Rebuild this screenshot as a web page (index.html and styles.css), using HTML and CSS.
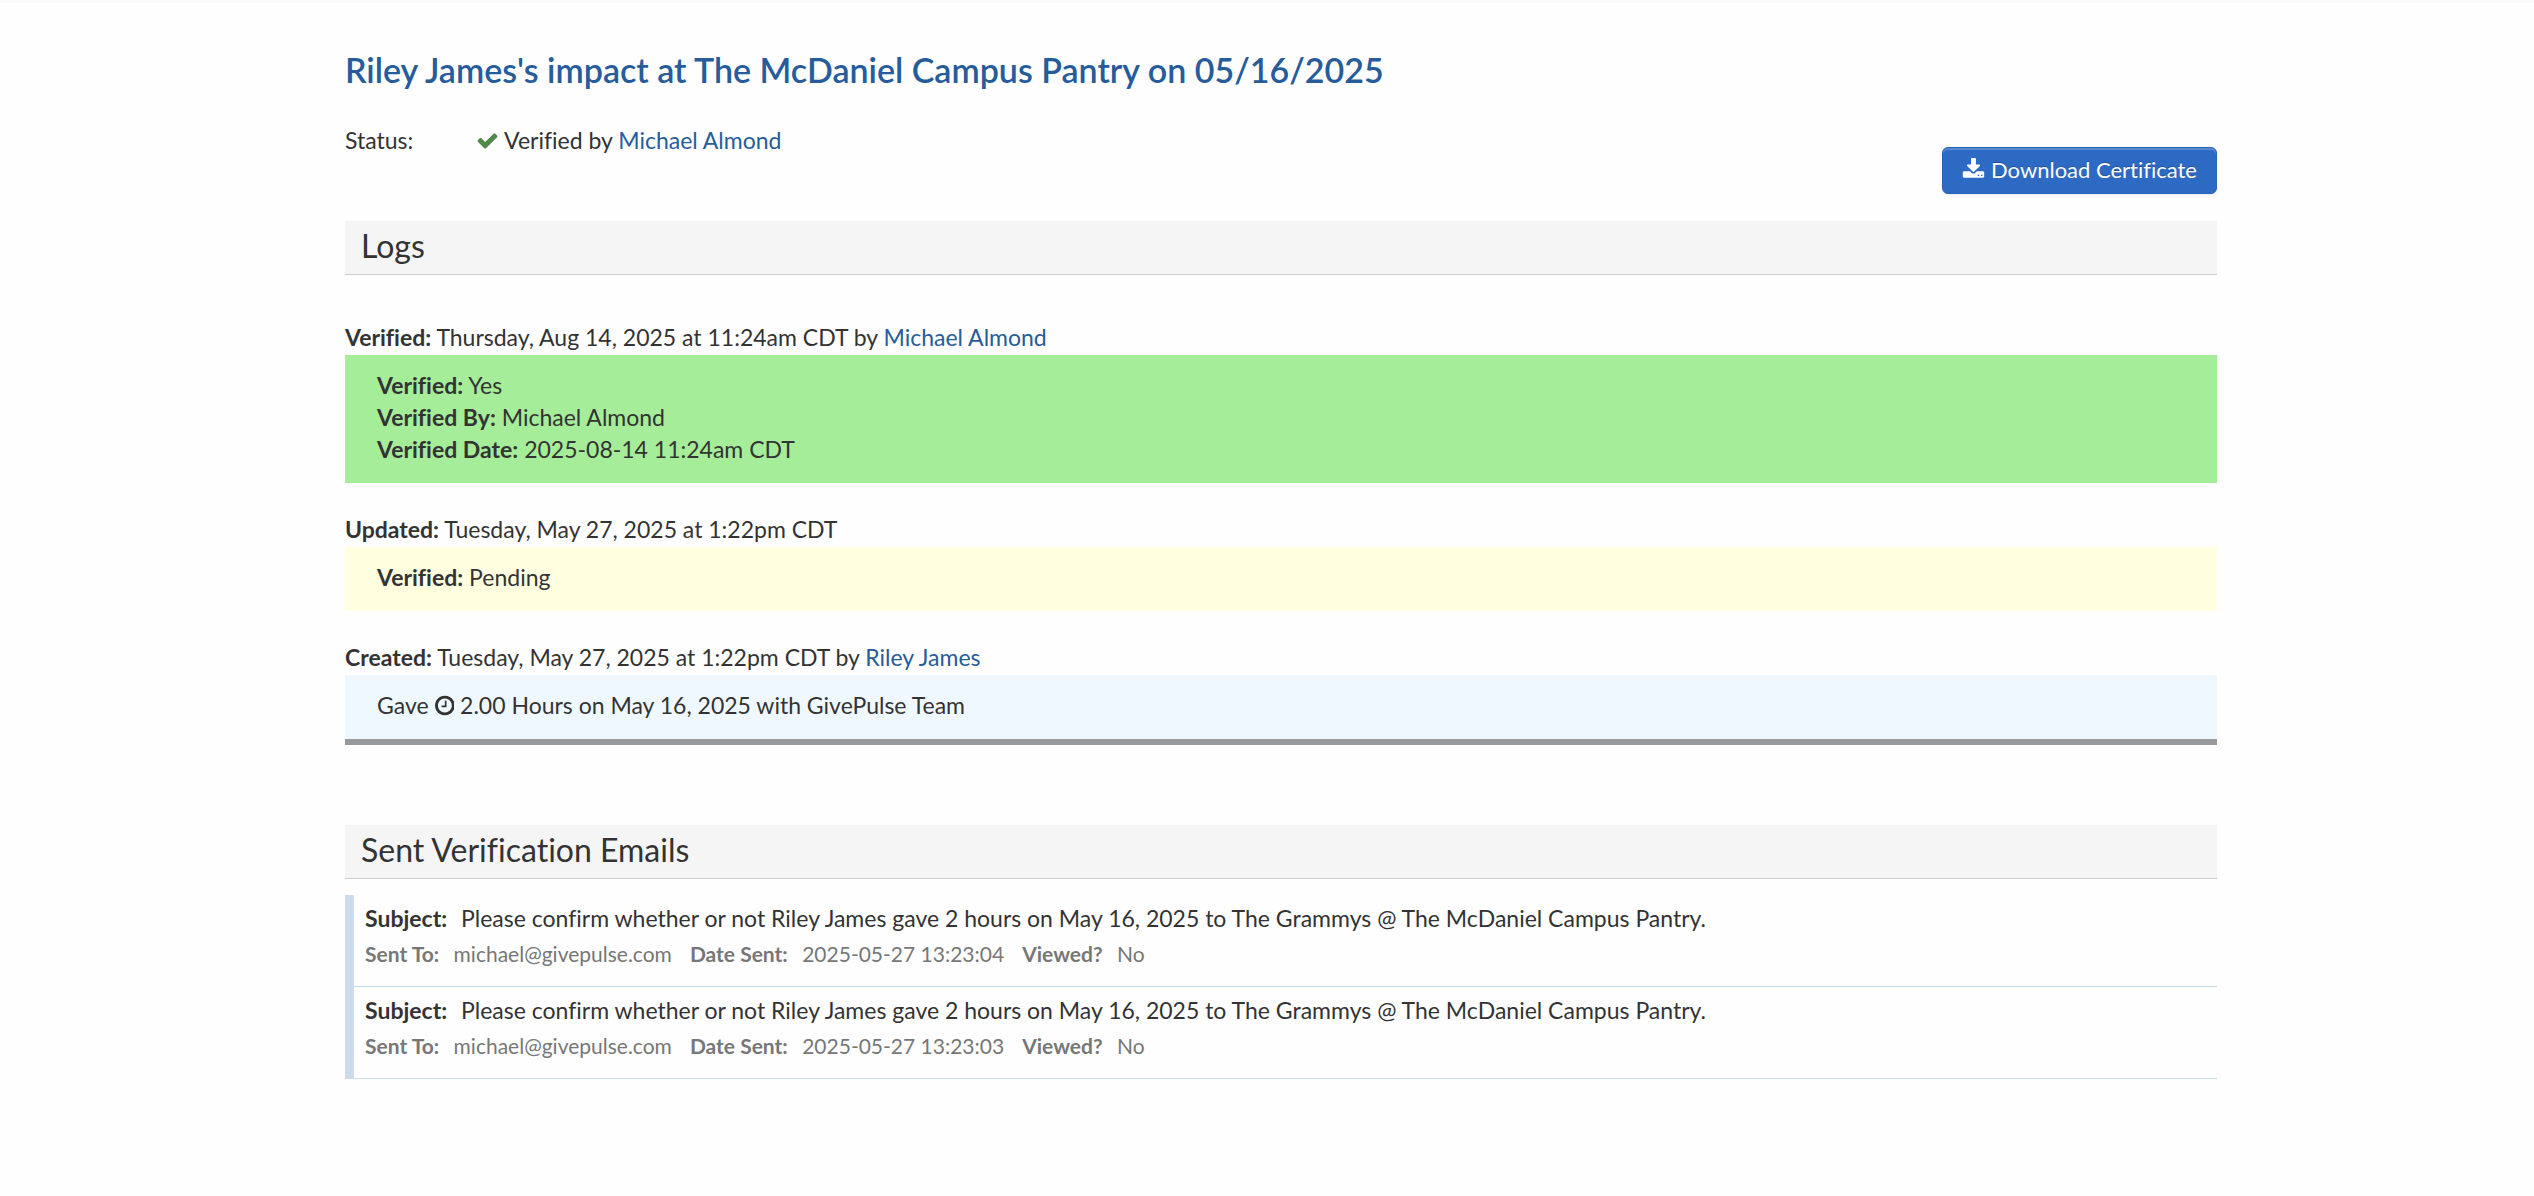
FILE: index.html
```html
<!DOCTYPE html>
<html lang="en">
<head>
    <meta charset="UTF-8">
    <title>Riley James's impact</title>
    <link rel="stylesheet" href="styles.css">
</head>
<body>
<div class="container">
    <h1><a href="#">Riley James's impact at The McDaniel Campus Pantry on 05/16/2025</a></h1>

    <div class="summary">
        <dl class="status">
            <dt>Status:</dt>
            <dd>
                <svg class="icon icon-ok" viewBox="0 0 1792 1792" aria-hidden="true"><path d="M1671 566q0 40-28 68l-724 724-136 136q-28 28-68 28t-68-28l-136-136-362-362q-28-28-28-68t28-68l136-136q28-28 68-28t68 28l294 295 656-657q28-28 68-28t68 28l136 136q28 28 28 68z"/></svg>
                Verified by <a href="#">Michael Almond</a>
            </dd>
        </dl>
        <button class="btn" type="button">
            <svg class="icon" viewBox="0 0 1792 1792" aria-hidden="true"><path d="M1344 1344q0-26-19-45t-45-19-45 19-19 45 19 45 45 19 45-19 19-45zm256 0q0-26-19-45t-45-19-45 19-19 45 19 45 45 19 45-19 19-45zm128-224v320q0 40-28 68t-68 28h-1472q-40 0-68-28t-28-68v-320q0-40 28-68t68-28h465l135 136q58 56 136 56t136-56l136-136h464q40 0 68 28t28 68zm-325-569q17 41-14 70l-448 448q-18 19-45 19t-45-19l-448-448q-31-29-14-70 17-39 59-39h256v-448q0-26 19-45t45-19h256q26 0 45 19t19 45v448h256q42 0 59 39z"/></svg>
            Download Certificate
        </button>
    </div>

    <!-- Logs -->
    <h2>Logs</h2>
    <div class="logs">
        <div class="log">
            <p class="log-title"><strong>Verified:</strong> Thursday, Aug 14, 2025 at 11:24am CDT by <a href="#">Michael Almond</a></p>
            <div class="log-body verified">
                <p><strong>Verified:</strong> Yes</p>
                <p><strong>Verified By:</strong> Michael Almond</p>
                <p><strong>Verified Date:</strong> 2025-08-14 11:24am CDT</p>
            </div>
        </div>
        <div class="log">
            <p class="log-title"><strong>Updated:</strong> Tuesday, May 27, 2025 at 1:22pm CDT</p>
            <div class="log-body updated">
                <p><strong>Verified:</strong> Pending</p>
            </div>
        </div>
        <div class="log">
            <p class="log-title"><strong>Created:</strong> Tuesday, May 27, 2025 at 1:22pm CDT by <a href="#">Riley James</a></p>
            <div class="log-body created">
                <p>Gave <svg class="icon" viewBox="0 0 1536 1792" aria-hidden="true"><path d="M896 544v448q0 14-9 23t-23 9h-320q-14 0-23-9t-9-23v-64q0-14 9-23t23-9h224v-352q0-14 9-23t23-9h64q14 0 23 9t9 23zm416 352q0-148-73-273t-198-198-273-73-273 73-198 198-73 273 73 273 198 198 273 73 273-73 198-198 73-273zm224 0q0 209-103 385.500t-279.500 279.500-385.500 103-385.500-103-279.500-279.500-103-385.500 103-385.500 279.500-279.500 385.500-103 385.500 103 279.500 279.500 103 385.500z"/></svg> 2.00 Hours on May 16, 2025 with GivePulse Team</p>
            </div>
        </div>
    </div>

    <!-- Emails -->
    <h2>Sent Verification Emails</h2>
    <ul class="emails">
        <li>
            <p class="subject"><strong>Subject:</strong> Please confirm whether or not Riley James gave 2 hours on May 16, 2025 to The Grammys @ The McDaniel Campus Pantry.</p>
            <p class="meta">
                <span><strong>Sent To:</strong> michael@givepulse.com</span>
                <span><strong>Date Sent:</strong> 2025-05-27 13:23:04</span>
                <span><strong>Viewed?</strong> No</span>
            </p>
        </li>
        <li>
            <p class="subject"><strong>Subject:</strong> Please confirm whether or not Riley James gave 2 hours on May 16, 2025 to The Grammys @ The McDaniel Campus Pantry.</p>
            <p class="meta">
                <span><strong>Sent To:</strong> michael@givepulse.com</span>
                <span><strong>Date Sent:</strong> 2025-05-27 13:23:03</span>
                <span><strong>Viewed?</strong> No</span>
            </p>
        </li>
    </ul>
</div>
</body>
</html>
```
FILE: styles.css
```css
* {
    margin: 0;
    padding: 0;
    box-sizing: border-box;
}

body {
    font-family: Avenir, Lato, sans-serif;
    font-size: 23px;
    line-height: 32px;
    font-variant-ligatures: no-common-ligatures;
    color: #333;
    background: #fefefe;
    border-top: 3px solid #fafafa;
}

.container {
    padding: 43px 317px 80px 345px;
}

a {
    color: #265c9a;
    text-decoration: none;
}

a:hover {
    text-decoration: underline;
}

h1 {
    font-size: 34px;
    line-height: 48px;
    font-weight: 600;
}

h2 {
    height: 54px;
    padding-left: 16px;
    font-size: 32px;
    line-height: 50px;
    font-weight: 400;
    background: #f5f5f5;
    border-bottom: 1px solid #ccc;
}

.icon {
    height: 23px;
    fill: currentColor;
    vertical-align: -3px;
}

.icon-ok {
    color: #4f8a48;
}

/* status + download */
.summary {
    display: flex;
    justify-content: space-between;
    align-items: flex-start;
    padding-top: 30px;
    margin-bottom: 27px;
}

.status {
    display: flex;
}

.status dt {
    width: 131px;
}

.btn {
    height: 47px;
    margin-top: 23px;
    padding: 0 19px 2px;
    font: inherit;
    font-size: 22px;
    color: #fff;
    background: #2d6ac4;
    border: 1px solid #2862b8;
    border-radius: 6px;
    box-shadow: inset 0 2px 0 rgba(255,255,255,0.2), 0 2px 3px rgba(0,0,0,0.05);
    text-shadow: 0 -1px 0 rgba(0,0,0,0.25);
    cursor: pointer;
}

.btn:hover {
    background: #2459a8;
}

/* logs */
.logs {
    display: flex;
    flex-direction: column;
    gap: 30px;
    margin: 46px 0 80px;
    border-bottom: 6px solid #999;
}

.log-title {
    padding-bottom: 2px;
}

.log-body {
    padding: 14px 32px 18px;
}

.verified {
    background: #a6ed99;
}

.updated {
    background: #ffffe0;
}

.created {
    background: #f0f8ff;
}

/* emails */
.emails {
    margin-top: 16px;
    list-style: none;
    border-left: 9px solid #cddcec;
}

.emails li {
    padding: 7px 11px 14px;
    border-bottom: 1px solid #c9dcec;
}

.subject strong {
    margin-right: 8px;
}

.meta {
    display: flex;
    gap: 18px;
    padding-top: 2px;
    font-size: 21px;
    line-height: 36px;
    color: #777;
}

.meta strong {
    margin-right: 9px;
}
```
